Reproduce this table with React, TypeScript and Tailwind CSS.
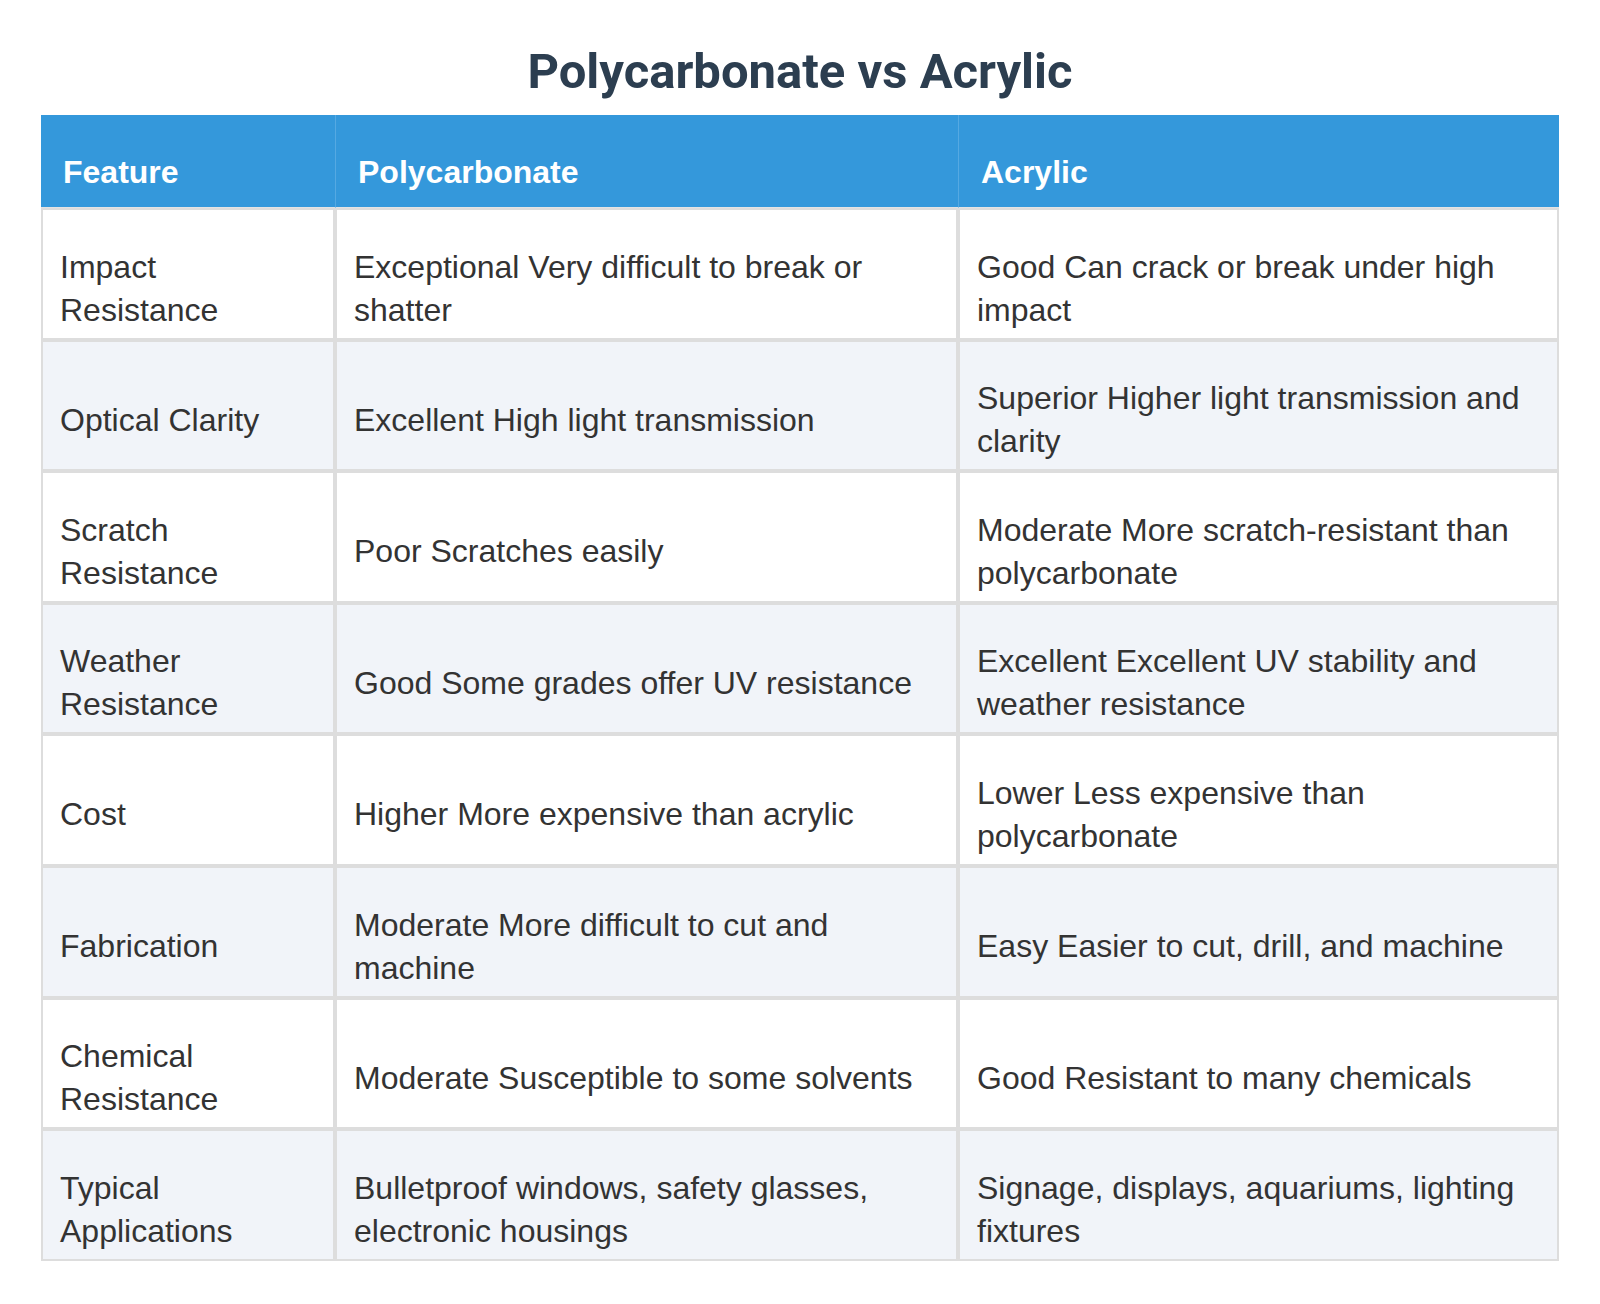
const rows = [
  {
    feature: "Impact Resistance",
    poly: "Exceptional Very difficult to break or shatter",
    acrylic: "Good Can crack or break under high impact",
  },
  {
    feature: "Optical Clarity",
    poly: "Excellent High light transmission",
    acrylic: "Superior Higher light transmission and clarity",
  },
  {
    feature: "Scratch Resistance",
    poly: "Poor Scratches easily",
    acrylic: "Moderate More scratch-resistant than polycarbonate",
  },
  {
    feature: "Weather Resistance",
    poly: "Good Some grades offer UV resistance",
    acrylic: "Excellent Excellent UV stability and weather resistance",
  },
  {
    feature: "Cost",
    poly: "Higher More expensive than acrylic",
    acrylic: "Lower Less expensive than polycarbonate",
  },
  {
    feature: "Fabrication",
    poly: "Moderate More difficult to cut and machine",
    acrylic: "Easy Easier to cut, drill, and machine",
  },
  {
    feature: "Chemical Resistance",
    poly: "Moderate Susceptible to some solvents",
    acrylic: "Good Resistant to many chemicals",
  },
  {
    feature: "Typical Applications",
    poly: "Bulletproof windows, safety glasses, electronic housings",
    acrylic: "Signage, displays, aquariums, lighting fixtures",
  },
];

const cell =
  "border-2 border-[#dddddd] px-[17px] pt-[35.6px] pb-[6px] align-middle text-left font-normal";

export default function App() {
  return (
    <div className="min-h-[1304px] bg-white">
      <h1 className="mt-[43px] mb-[15px] text-center font-['Roboto',sans-serif] text-[49px] leading-[57px] font-bold text-[#2c3e50]">
        Polycarbonate vs Acrylic
      </h1>

      <table className="mx-auto w-[1518px] table-fixed border-separate border-spacing-0 font-['Liberation_Sans',Arial,sans-serif] text-[32px] leading-[43px] text-[#333333]">
        <thead>
          <tr className="bg-[#3498db] text-white">
            <th className="w-[294px] border-b border-[#e3e3e3] px-[22px] pt-[36px] pb-[13px] text-left font-bold">
              Feature
            </th>
            <th className="w-[623px] border-b border-l border-b-[#e3e3e3] border-l-[#55a9e2] px-[22px] pt-[36px] pb-[13px] text-left font-bold">
              Polycarbonate
            </th>
            <th className="border-b border-l border-b-[#e3e3e3] border-l-[#55a9e2] px-[22px] pt-[36px] pb-[13px] text-left font-bold">
              Acrylic
            </th>
          </tr>
        </thead>
        <tbody>
          {rows.map((row, index) => (
            <tr key={row.feature} className={index % 2 === 1 ? "bg-[#f1f4f9]" : "bg-white"}>
              <td className={cell}>{row.feature}</td>
              <td className={cell}>{row.poly}</td>
              <td className={cell}>{row.acrylic}</td>
            </tr>
          ))}
        </tbody>
      </table>
    </div>
  );
}
